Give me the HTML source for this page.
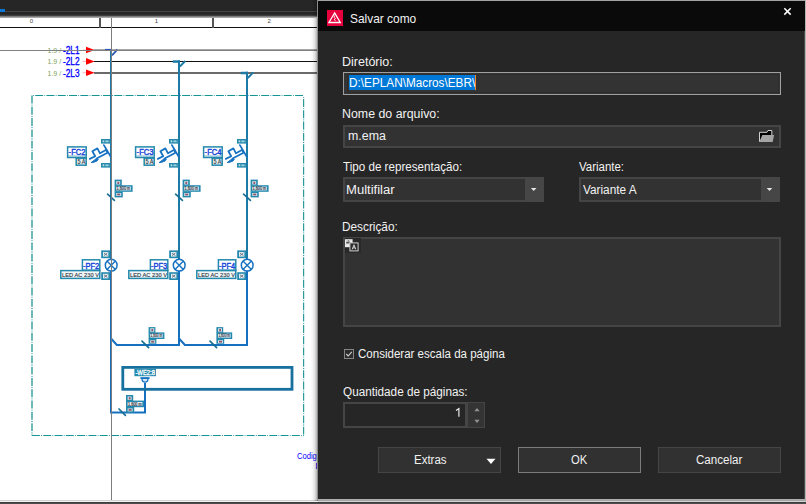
<!DOCTYPE html>
<html>
<head>
<meta charset="utf-8">
<title>Salvar como</title>
<style>
html,body{margin:0;padding:0;}
body{width:806px;height:504px;overflow:hidden;background:#262626;position:relative;font-family:"Liberation Sans",sans-serif;font-size:12px;color:#f0f0f0;}
.abs{position:absolute;}
#top{left:0;top:0;width:806px;height:17px;background:#262626;}
#page{left:0;top:17px;width:806px;height:485px;background:#fff;}
#bottom{left:0;top:500px;width:806px;height:4px;background:linear-gradient(to bottom,#d2d2d2 0,#d2d2d2 25%,#f2f2f2 25%,#f2f2f2 40%,#3c3c3c 50%,#3c3c3c 70%,#4c4c4c 75%,#4c4c4c 100%);}
#sch{left:0;top:0;}
#shadow{left:310px;top:0;width:8px;height:501px;background:linear-gradient(to right,rgba(0,0,0,0),rgba(0,0,0,0.03) 30%,rgba(0,0,0,0.1) 55%,rgba(0,0,0,0.22) 78%,rgba(0,0,0,0.48) 100%);}
#dlg{left:317px;top:0;width:489px;height:499px;}
#bshadow{left:318px;top:499px;width:488px;height:3px;background:linear-gradient(to bottom,rgba(0,0,0,0.36),rgba(0,0,0,0.08));z-index:2;}
#dbg{left:1px;top:0;width:488px;height:499px;background:#262626;}
#tbar{left:1px;top:1px;width:487px;height:30px;background:#0a0a0a;}
.lbl{position:absolute;white-space:nowrap;color:#f2f2f2;font-size:12.5px;line-height:14px;transform-origin:0 50%;}
.box{position:absolute;box-sizing:border-box;background:#323232;border:2px solid #454545;}
.btn{position:absolute;box-sizing:border-box;background:#313131;border:1px solid #454545;}
</style>
</head>
<body>
<div id="top" class="abs"></div>
<div class="abs" style="left:0;top:11px;width:318px;height:1px;background:#454545;"></div>
<div class="abs" style="left:0;top:9px;width:5px;height:3px;background:#0a78d4;"></div>
<div class="abs" style="left:0;top:14px;width:318px;height:1px;background:#2c2c2c;"></div>
<div class="abs" style="left:0;top:15px;width:318px;height:1px;background:#3e3e3e;"></div>
<div class="abs" style="left:0;top:16px;width:318px;height:1px;background:#7c7c7c;"></div>
<div class="abs" style="left:0;top:17px;width:318px;height:1px;background:#a6a6a6;z-index:1;"></div>
<div id="page" class="abs"></div>
<svg id="sch" class="abs" width="318" height="504" viewBox="0 0 318 504">
<defs>
  <g id="brk" fill="none" stroke="#1772c2" stroke-width="1.8" stroke-linecap="round" stroke-linejoin="round">
    <path d="M103.9 145.1 L110.8 156.9"/>
    <path d="M89.8 158.85 L95.2 156.2 L92.4 151.2 L97.4 148.4 L100 153.3 L106.3 149.8 L107.5 152.8 L96.6 158.5"/>
    <path d="M91.4 162.4 L96.4 158.6 L98.3 159.2 Q97.8 161.4 94.4 162.1 Z" fill="#1772c2" stroke-width="1"/>
  </g>
  <g id="sm">
    <rect x="101" y="139" width="9.5" height="4.6" fill="#2489ad"/>
    <rect x="102.6" y="140.3" width="1.6" height="2" fill="#b4dbe6"/><rect x="104.8" y="140.6" width="0.8" height="1.6" fill="#b4dbe6"/><rect x="106.2" y="140.3" width="1.6" height="2" fill="#b4dbe6"/><rect x="108.4" y="140.6" width="0.9" height="1.6" fill="#b4dbe6"/>
  </g>
  <g id="cab">
    <rect x="0" y="0" width="7.2" height="6" fill="#2489ad"/>
    <rect x="0" y="5.6" width="18" height="6.6" fill="#2489ad"/>
    <rect x="0" y="12" width="8.2" height="5.8" fill="#2489ad"/>
    <rect x="1.6" y="1.5" width="4" height="3.4" fill="#d9dfe6"/>
    <rect x="1.6" y="7" width="14.8" height="3.8" fill="#e6eef2"/>
    <rect x="1.6" y="13.4" width="5" height="3" fill="#d9dfe6"/>
    <rect x="2.8" y="2.2" width="1.8" height="2.2" fill="#8a5a70"/>
    <rect x="2.6" y="14" width="3" height="1.8" fill="#8a5a70"/>
    <text x="2" y="10.6" font-family="Liberation Sans, sans-serif" font-size="4.6" fill="#3a4250" stroke="#3a4250" stroke-width="0.2" textLength="13.6" lengthAdjust="spacingAndGlyphs">1,600 m</text>
  </g>
  <g id="cab2">
    <rect x="0" y="0.3" width="6.8" height="5.7" fill="#2489ad"/>
    <rect x="0" y="5.6" width="15.8" height="6.6" fill="#2489ad"/>
    <rect x="0" y="12" width="7.8" height="5" fill="#2489ad"/>
    <rect x="1.6" y="1.5" width="4" height="3.4" fill="#d9dfe6"/>
    <rect x="1.6" y="7" width="12.6" height="3.8" fill="#e6eef2"/>
    <rect x="1.6" y="13.4" width="5" height="3" fill="#d9dfe6"/>
    <rect x="2.8" y="2.2" width="1.8" height="2.2" fill="#8a5a70"/>
    <rect x="2.6" y="14" width="3" height="1.8" fill="#8a5a70"/>
    <text x="2" y="10.6" font-family="Liberation Sans, sans-serif" font-size="4.6" fill="#3a4250" stroke="#3a4250" stroke-width="0.2" textLength="11.6" lengthAdjust="spacingAndGlyphs">1,600 m</text>
  </g>
</defs>
<!-- ruler -->
<rect x="0" y="27" width="318" height="1" fill="#111"/>
<rect x="99" y="18" width="2" height="10" fill="#555"/>
<rect x="212" y="18" width="2" height="10" fill="#555"/>
<g font-family="Liberation Sans, sans-serif" font-size="6" fill="#444" text-anchor="middle">
  <text x="31.4" y="23">0</text><text x="156.4" y="23">1</text><text x="269.2" y="23">2</text>
</g>
<!-- potential lines -->
<rect x="94" y="61" width="224" height="1" fill="#111"/>
<rect x="94" y="72" width="224" height="2" fill="#6a6a6a"/>
<rect x="94" y="49" width="224" height="1" fill="#a8a8a8"/>
<!-- labels -->
<g font-family="Liberation Sans, sans-serif" font-size="7" fill="#7da25e">
  <text x="47.5" y="53">1.9 /</text><text x="47.5" y="64.4">1.9 /</text><text x="47.5" y="75.8">1.9 /</text>
</g>
<g font-family="Liberation Sans, sans-serif" font-size="10" fill="#0000ff" stroke="#0000ff" stroke-width="0.3">
  <text x="63" y="53.7" textLength="16.6" lengthAdjust="spacingAndGlyphs">-2L1</text>
  <text x="63" y="65.1" textLength="16.6" lengthAdjust="spacingAndGlyphs">-2L2</text>
  <text x="63" y="76.5" textLength="16.6" lengthAdjust="spacingAndGlyphs">-2L3</text>
</g>
<g fill="#ff0000">
  <path d="M86 46.7 L94.6 50 L86 53.3 Z"/><path d="M86 58.1 L94.6 61.4 L86 64.7 Z"/><path d="M86 69.5 L94.6 72.8 L86 76.1 Z"/>
</g>
<g stroke="#ff9aa0" stroke-width="0.8">
  <path d="M82.7 50 H86"/><path d="M82.7 61.4 H86"/><path d="M82.7 72.8 H86"/>
</g>
<!-- dashed frame -->
<g fill="none" stroke="#149494" stroke-dasharray="7.9 1.3 0.8 1.3">
  <path d="M32 95.5 H304" stroke-width="1" stroke-dashoffset="8.1"/>
  <path d="M32 435.5 H304" stroke-width="1"/>
  <path d="M32 95.5 V435.5" stroke-width="1.6" stroke="#4aa9a9"/>
  <path d="M303.6 95.5 V435.5" stroke-width="1.2" stroke="#2a9a9a" stroke-dashoffset="7.8"/>
</g>
<!-- vertical wires teal -->
<g fill="none" stroke="#1c7ba6" stroke-width="2">
  <path d="M111 50 V259"/>
  <path d="M179 60.4 V259"/>
  <path d="M247 71.8 V259"/>
  <path d="M172.8 61.55 H180" stroke-width="2.5"/>
  <path d="M240.8 73 H248" stroke-width="2.5"/>
  <path d="M185.2 61 L179.8 66.6" stroke-width="2"/>
  <path d="M253.2 72.4 L247.8 78" stroke-width="2"/>
</g>
<path d="M105 49.5 H111" stroke="#2a58b4" stroke-width="1.2"/>
<path d="M117.3 49.6 L112 55.4" stroke="#2a58b4" stroke-width="1.8"/>
<!-- lower wires blue -->
<g fill="none" stroke="#1570c0" stroke-width="2" stroke-linejoin="miter">
  <path d="M111 259 V412.5 H145 V383"/>
  <path d="M179 259 V346"/>
  <path d="M247 259 V346"/>
  <path d="M111.5 339 L116.8 345 H180"/>
  <path d="M179.5 339 L184.9 345 H248"/>
</g>
<!-- slashes -->
<g stroke="#1a6f94" stroke-width="1.7" stroke-linecap="round">
  <path d="M107.6 194.2 L114.4 200.4"/><path d="M175.6 194.2 L182.4 200.4"/><path d="M243.6 194.2 L250.4 200.4"/>
  <path d="M142 341.2 L148.6 347.6"/><path d="M210 341.2 L216.6 347.6"/>
  <path d="M119 409 L125.4 415.4"/>
</g>
<!-- breakers -->
<use href="#brk"/><use href="#brk" x="68"/><use href="#brk" x="136"/>
<use href="#sm"/><use href="#sm" y="24"/>
<use href="#sm" x="68"/><use href="#sm" x="68" y="24"/>
<use href="#sm" x="136"/><use href="#sm" x="136" y="24"/>
<!-- cable labels -->
<use href="#cab" x="114.6" y="179.6"/><use href="#cab" x="182.6" y="179.6"/><use href="#cab" x="250.6" y="179.6"/>
<use href="#cab2" x="148.6" y="326.8"/><use href="#cab2" x="216.4" y="326.8"/>
<use href="#cab" x="126" y="395"/>

<!-- FC labels -->
<g id="fcl">
  <rect x="67.6" y="146.9" width="18.6" height="10.6" fill="#fff" stroke="#2489ad" stroke-width="1.5"/>
  <path d="M68 156 H86" stroke="#5aa6c2" stroke-width="0.8"/>
  <rect x="76.2" y="158.2" width="10" height="7" fill="#e8f0f3" stroke="#2489ad" stroke-width="1.5"/>
</g>
<use href="#fcl" x="68"/><use href="#fcl" x="136"/>
<g font-family="Liberation Sans, sans-serif" font-size="9" fill="#1a46d8" stroke="#1a46d8" stroke-width="0.45">
  <text x="68.6" y="155.4" textLength="17" lengthAdjust="spacingAndGlyphs">-FC2</text>
  <text x="136.6" y="155.4" textLength="17" lengthAdjust="spacingAndGlyphs">-FC3</text>
  <text x="204.6" y="155.4" textLength="17" lengthAdjust="spacingAndGlyphs">-FC4</text>
</g>
<g font-family="Liberation Sans, sans-serif" font-size="6.4" fill="#2e3a48" stroke="#2e3a48" stroke-width="0.15">
  <text x="77.4" y="164.2" textLength="8" lengthAdjust="spacingAndGlyphs">5 A</text>
  <text x="145.4" y="164.2" textLength="8" lengthAdjust="spacingAndGlyphs">5 A</text>
  <text x="213.4" y="164.2" textLength="8" lengthAdjust="spacingAndGlyphs">5 A</text>
</g>
<!-- PF lamps -->
<g id="pf">
  <rect x="82.4" y="259.8" width="17.4" height="10.4" fill="#fff" stroke="#2489ad" stroke-width="1.5"/>
  <rect x="60.8" y="270.6" width="39" height="7.8" fill="#f2f7f9" stroke="#2489ad" stroke-width="1.5"/>
  <rect x="101.2" y="250.4" width="8.9" height="7.8" fill="#2489ad"/>
  <rect x="103" y="252" width="5.4" height="4.6" fill="#e4eef2"/>
  <rect x="101.2" y="272.2" width="8.9" height="7.8" fill="#2489ad"/>
  <rect x="103" y="273.8" width="5.4" height="4.6" fill="#e4eef2"/>
  <path d="M104 253 L107.4 255.6 M107.4 253 L104 255.6" stroke="#506070" stroke-width="0.8"/>
  <path d="M104 274.8 L107.4 277.4 M107.4 274.8 L104 277.4" stroke="#506070" stroke-width="0.8"/>
  <circle cx="111.2" cy="265.2" r="5.9" fill="#fff" stroke="#1772c2" stroke-width="1.5"/>
  <path d="M107 261 L115.4 269.4 M115.4 261 L107 269.4" stroke="#1772c2" stroke-width="1.4"/>
</g>
<use href="#pf" x="68"/><use href="#pf" x="136"/>
<g font-family="Liberation Sans, sans-serif" font-size="9" fill="#1a46d8" stroke="#1a46d8" stroke-width="0.45">
  <text x="83" y="268.6" textLength="16.2" lengthAdjust="spacingAndGlyphs">-PF2</text>
  <text x="151" y="268.6" textLength="16.2" lengthAdjust="spacingAndGlyphs">-PF3</text>
  <text x="219" y="268.6" textLength="16.2" lengthAdjust="spacingAndGlyphs">-PF4</text>
</g>
<g font-family="Liberation Sans, sans-serif" font-size="6.2" fill="#2e3a48" stroke="#2e3a48" stroke-width="0.15">
  <text x="62" y="277" textLength="37" lengthAdjust="spacingAndGlyphs">LED AC 230 V</text>
  <text x="130" y="277" textLength="37" lengthAdjust="spacingAndGlyphs">LED AC 230 V</text>
  <text x="198" y="277" textLength="37" lengthAdjust="spacingAndGlyphs">LED AC 230 V</text>
</g>
<!-- busbar rectangle -->
<rect x="122.8" y="367.4" width="169.2" height="21.9" fill="none" stroke="#17709e" stroke-width="2.8"/>
<rect x="134.4" y="368.8" width="21.6" height="7.4" fill="#2489ad"/>
<text x="135.4" y="375.4" font-family="Liberation Sans, sans-serif" font-size="6.6" fill="#fff" stroke="#fff" stroke-width="0.3" textLength="19.6" lengthAdjust="spacingAndGlyphs">-WE2:8</text>
<path d="M141.9 378.2 C142 383.4 148 383.4 148.1 378.2 Z" fill="#d4e6f4" stroke="#1772c2" stroke-width="1.3"/>
<path d="M140.4 378.1 H149.6" stroke="#1772c2" stroke-width="1.7"/>
<!-- cursor vertical -->
<rect x="111" y="17" width="1" height="484" fill="#7d7d7d"/>
<rect x="0" y="50" width="318" height="1" fill="#808080"/>
<!-- Codig text -->
<g font-family="Liberation Sans, sans-serif" font-size="9.4" fill="#0000ff">
  <text x="297" y="459.4" textLength="24" lengthAdjust="spacingAndGlyphs">Codigo</text>
  <text x="315.2" y="468.6">I</text>
</g>
</svg>
<div id="bottom" class="abs"></div>
<div id="shadow" class="abs"></div>
<div id="bshadow" class="abs"></div>
<div id="dlg" class="abs">
  <div id="dbg" class="abs"></div>
  <div class="abs" style="left:0;top:0;width:489px;height:1px;background:#a2a2a2;"></div>
  <div class="abs" style="left:0;top:0;width:1px;height:499px;background:#8c8c8c;"></div>
  <div class="abs" style="left:488px;top:0;width:1px;height:499px;background:#b4b4b4;"></div>
  <div class="abs" style="left:487px;top:1px;width:1px;height:498px;background:#4a4a4a;"></div>
    <div id="tbar" class="abs"></div>
  <!-- app icon -->
  <svg class="abs" style="left:10px;top:10px;" width="16" height="16" viewBox="0 0 16 16">
    <rect width="16" height="16" fill="#e6003c"/>
    <path d="M7.6 2.9 L13.3 12.5 H1.9 Z" fill="none" stroke="#fff" stroke-width="1.3" stroke-linejoin="miter"/>
    <path d="M7.5 5.6 L7.2 7.4 L8.4 8.6 L7.3 9.2 L8.3 10.8" fill="none" stroke="#fff" stroke-width="0.9"/>
  </svg>
  <div class="lbl" id="t_title" style="left:33.08px;top:11.6px;font-size:13px;transform:scaleX(0.9167);">Salvar como</div>
  <svg class="abs" style="left:466px;top:7px;" width="10" height="10" viewBox="0 0 10 10"><path d="M1.3 1.2 L7.7 7.6 M7.7 1.2 L1.3 7.6" stroke="#fff" stroke-width="1.5"/></svg>

  <div class="lbl" id="t_dir" style="left:24.80px;top:54.7px;font-size:12px;transform:scaleX(1.0424);">Diretório:</div>
  <div class="box" style="left:26px;top:72px;width:438px;height:23px;border:1px solid #a0a0a0;background:#343434;"></div>
  <div class="abs" style="left:30px;top:74px;width:432px;height:19px;background:#2d2d2d;"></div>
  <div class="abs" style="left:31px;top:75px;width:430px;height:17px;background:#333;"></div>
  <div class="abs" style="left:32px;top:75px;width:127px;height:15px;background:#0078d7;"></div>
  <div class="lbl" id="t_path" style="left:32.09px;top:76.1px;font-size:12px;color:#fff;transform:scaleX(0.9807);">D:\EPLAN\Macros\EBR\</div>
  <div class="abs" style="left:158px;top:75px;width:1px;height:15px;background:#ff8728;"></div>

  <div class="lbl" id="t_nome" style="left:24.85px;top:107.1px;font-size:12px;transform:scaleX(1.0312);">Nome do arquivo:</div>
  <div class="box" style="left:26px;top:125px;width:438px;height:23px;"></div>
  <div class="lbl" id="t_mema" style="left:30.61px;top:128.5px;font-size:12px;transform:scaleX(1.0326);">m.ema</div>
  <svg class="abs" style="left:441px;top:129px;" width="17" height="14" viewBox="0 0 17 14">
    <path d="M1.5 12.6 V3.3 H9 L10 1.5 H13.8 V12.6 Z" fill="#000"/>
    <path d="M1.5 12.8 V3.3 H9 L10 1.5 H13.8 V6" fill="none" stroke="#d2d2d2" stroke-width="1"/>
    <path d="M1.3 13 L4.3 6 H16.1 L14.7 13 Z" fill="#a4a4a4"/>
  </svg>

  <div class="lbl" id="t_tipo" style="left:25.89px;top:159.7px;font-size:12px;transform:scaleX(0.9695);">Tipo de representação:</div>
  <div class="box" style="left:26px;top:177px;width:201px;height:25px;"></div>
  <div class="abs" style="left:208px;top:177px;width:19px;height:25px;background:#464646;"></div>
  <svg class="abs" style="left:213px;top:187px;" width="8" height="6" viewBox="0 0 8 6"><path d="M0.9 1 H6.5 L3.7 4 Z" fill="#e6e6e6"/></svg>
  <div class="lbl" id="t_multi" style="left:28.66px;top:182.5px;font-size:12px;transform:scaleX(1.0885);">Multifilar</div>

  <div class="lbl" id="t_var" style="left:261.9px;top:159.7px;font-size:12px;transform:scaleX(0.955);">Variante:</div>
  <div class="box" style="left:262px;top:177px;width:201px;height:25px;"></div>
  <div class="abs" style="left:444px;top:177px;width:19px;height:25px;background:#464646;"></div>
  <svg class="abs" style="left:449px;top:187px;" width="8" height="6" viewBox="0 0 8 6"><path d="M0.7 1 H6.3 L3.5 4 Z" fill="#e6e6e6"/></svg>
  <div class="lbl" id="t_vara" style="left:265.70px;top:182.5px;font-size:12px;transform:scaleX(0.9839);">Variante A</div>

  <div class="lbl" id="t_desc" style="left:24.81px;top:219.7px;font-size:12px;transform:scaleX(0.9832);">Descrição:</div>
  <div class="box" style="left:26px;top:237px;width:438px;height:90px;"></div>
  <div class="abs" style="left:28px;top:238px;width:16px;height:15px;background:#282828;"></div>
  <svg class="abs" style="left:28px;top:238.6px;" width="15" height="13" viewBox="0 0 15 13">
    <rect x="0" y="0.2" width="7.6" height="8" fill="#ececec"/>
    <path d="M1.6 2.2 L4.6 5 M4.8 1.6 L1.4 5.2 M3.2 1 V2 M1 3.6 H5.4" stroke="#444" stroke-width="0.8" fill="none"/>
    <rect x="4.9" y="3.9" width="8.2" height="8" fill="#2a2a2a" stroke="#d0d0d0" stroke-width="1"/>
    <path d="M7.2 10.4 L9 5.8 L10.8 10.4 M7.9 8.9 H10.1" stroke="#e4e4e4" stroke-width="0.9" fill="none"/>
  </svg>

  <div class="abs" style="left:27px;top:349px;width:10px;height:10px;border:1px solid #858585;box-sizing:border-box;background:#2b2b2b;"></div>
  <svg class="abs" style="left:27px;top:349px;" width="10" height="10" viewBox="0 0 10 10"><path d="M2.3 5 L4.2 7 L7.8 2.8" fill="none" stroke="#d4d4d4" stroke-width="1.1"/></svg>
  <div class="lbl" id="t_cons" style="left:40.70px;top:346.8px;font-size:12px;transform:scaleX(0.9610);">Considerar escala da página</div>

  <div class="lbl" id="t_quant" style="left:26.30px;top:384.8px;font-size:12px;transform:scaleX(0.9778);">Quantidade de páginas:</div>
  <div class="box" style="left:26px;top:402px;width:142px;height:26px;background:#262626;"></div>
  <div class="abs" style="left:148px;top:402px;width:20px;height:26px;background:#454545;"></div>
  <div class="abs" style="left:151px;top:403px;width:16px;height:24px;background:#343434;"></div>
    <svg class="abs" style="left:137px;top:406px;" width="8" height="12" viewBox="0 0 8 12"><path d="M2 4.4 L4.9 2.6 V10.8" fill="none" stroke="#f2f2f2" stroke-width="1.15"/></svg>
  <svg class="abs" style="left:155.5px;top:406.5px;" width="8" height="5" viewBox="0 0 8 5"><path d="M1.4 4.3 L4 1.1 L6.6 4.3 Z" fill="#929292"/></svg>
  <svg class="abs" style="left:155.5px;top:418.5px;" width="8" height="5" viewBox="0 0 8 5"><path d="M1.4 0.7 L4 3.9 L6.6 0.7 Z" fill="#929292"/></svg>

  <div class="btn" style="left:61px;top:447px;width:123px;height:26px;"></div>
  <div class="lbl" id="t_extras" style="left:96.78px;top:452.6px;font-size:12px;transform:scaleX(0.9566);">Extras</div>
  <svg class="abs" style="left:169px;top:458px;" width="10" height="7" viewBox="0 0 10 7"><path d="M0.5 0.8 H9.5 L5 6 Z" fill="#fff"/></svg>
  <div class="btn" style="left:201px;top:447px;width:123px;height:26px;border-color:#7c7c7c;"></div>
  <div class="lbl" id="t_ok" style="left:254.30px;top:452.6px;font-size:12px;transform:scaleX(0.9347);">OK</div>
  <div class="btn" style="left:341px;top:447px;width:123px;height:26px;"></div>
  <div class="lbl" id="t_canc" style="left:378.89px;top:452.6px;font-size:12px;transform:scaleX(0.9661);">Cancelar</div>
</div>
</body>
</html>
